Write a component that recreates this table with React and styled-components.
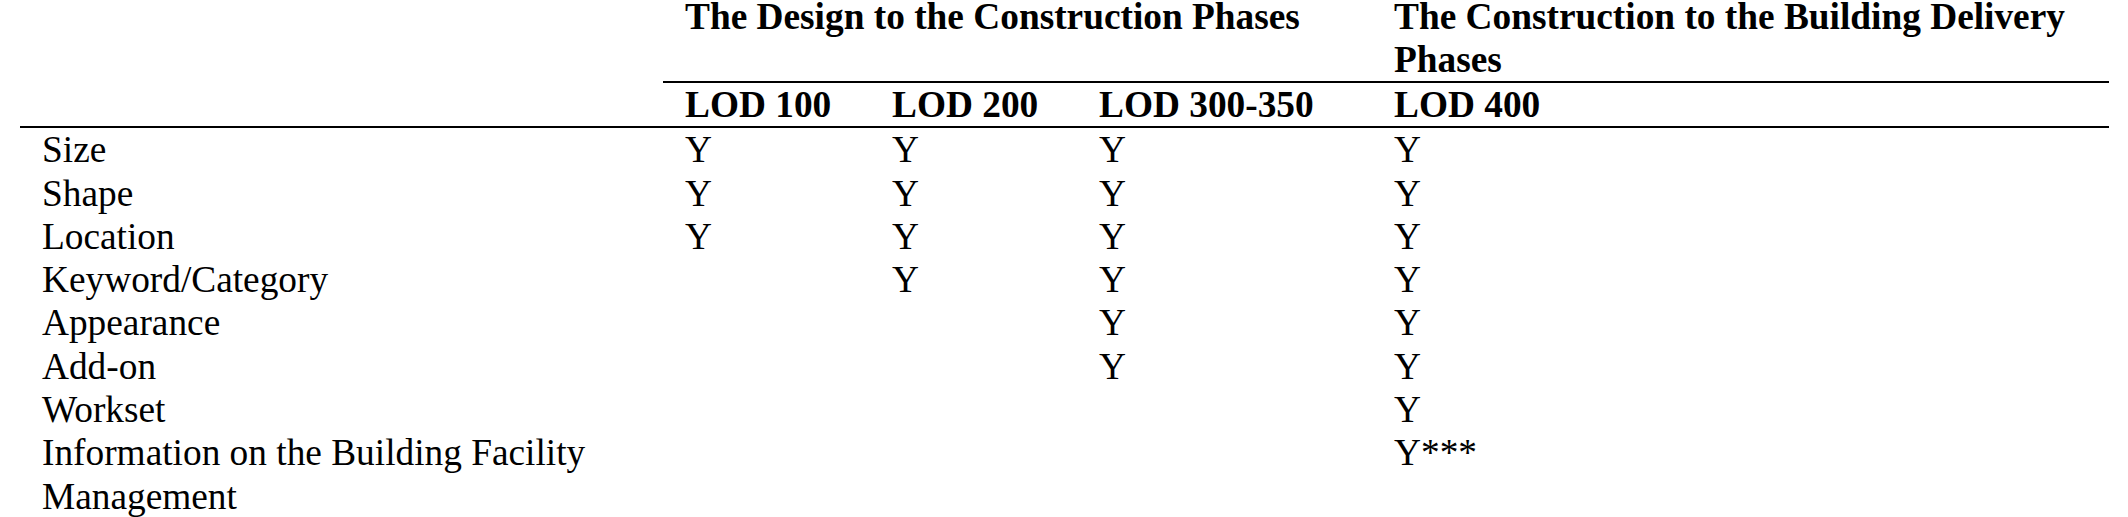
import React from 'react';
import styled, { createGlobalStyle } from 'styled-components';

const GlobalStyle = createGlobalStyle`
  html, body {
    margin: 0;
    padding: 0;
    background: #ffffff;
  }
  body {
    font-family: "Liberation Serif", "Times New Roman", serif;
    color: #000000;
  }
`;

const rows = [
  { label: 'Size', marks: ['Y', 'Y', 'Y', 'Y'] },
  { label: 'Shape', marks: ['Y', 'Y', 'Y', 'Y'] },
  { label: 'Location', marks: ['Y', 'Y', 'Y', 'Y'] },
  { label: 'Keyword/Category', marks: ['', 'Y', 'Y', 'Y'] },
  { label: 'Appearance', marks: ['', '', 'Y', 'Y'] },
  { label: 'Add-on', marks: ['', '', 'Y', 'Y'] },
  { label: 'Workset', marks: ['', '', '', 'Y'] },
  { label: 'Information on the Building Facility Management', marks: ['', '', '', 'Y***'] },
];

const levels = ['LOD 100', 'LOD 200', 'LOD 300-350', 'LOD 400'];

const App = () => {
  return (
    <>
      <GlobalStyle />
      <Page>
        <LodTable>
          <colgroup>
            <Col width="643px" />
            <Col width="207px" />
            <Col width="207px" />
            <Col width="295px" />
            <Col width="737px" />
          </colgroup>
          <thead>
            <tr>
              <BlankHead />
              <GroupHead colSpan={3}>The Design to the Construction Phases</GroupHead>
              <GroupHead>The Construction to the Building Delivery Phases</GroupHead>
            </tr>
            <tr>
              <LevelHead />
              {levels.map((lod) => (
                <LevelHead key={lod}>{lod}</LevelHead>
              ))}
            </tr>
          </thead>
          <tbody>
            {rows.map((row) => (
              <tr key={row.label}>
                <Cell>{row.label}</Cell>
                {row.marks.map((mark, i) => (
                  <Cell key={i}>{mark}</Cell>
                ))}
              </tr>
            ))}
          </tbody>
        </LodTable>
      </Page>
    </>
  );
};

const Page = styled.div`
  width: 2128px;
  padding: 0 0 8px 20px;
  box-sizing: border-box;
  background: #ffffff;
`;

const LodTable = styled.table`
  margin-top: -4px;
  width: 2089px;
  table-layout: fixed;
  border-collapse: separate;
  border-spacing: 0;
  font-size: 37.33px;
`;

const Col = styled.col``;

const BlankHead = styled.th`
  padding: 0;
`;

const GroupHead = styled.th`
  padding: 0 22px;
  text-align: left;
  vertical-align: top;
  font-weight: bold;
  line-height: 42.5px;
  height: 85px;
  border-bottom: 2px solid #000;
`;

const LevelHead = styled.th`
  padding: 0 22px;
  text-align: left;
  vertical-align: top;
  font-weight: bold;
  line-height: 43.3px;
  border-bottom: 2px solid #000;
  white-space: nowrap;
`;

const Cell = styled.td`
  padding: 0 22px;
  text-align: left;
  vertical-align: top;
  font-weight: normal;
  line-height: 43.3px;
`;

export default App;
